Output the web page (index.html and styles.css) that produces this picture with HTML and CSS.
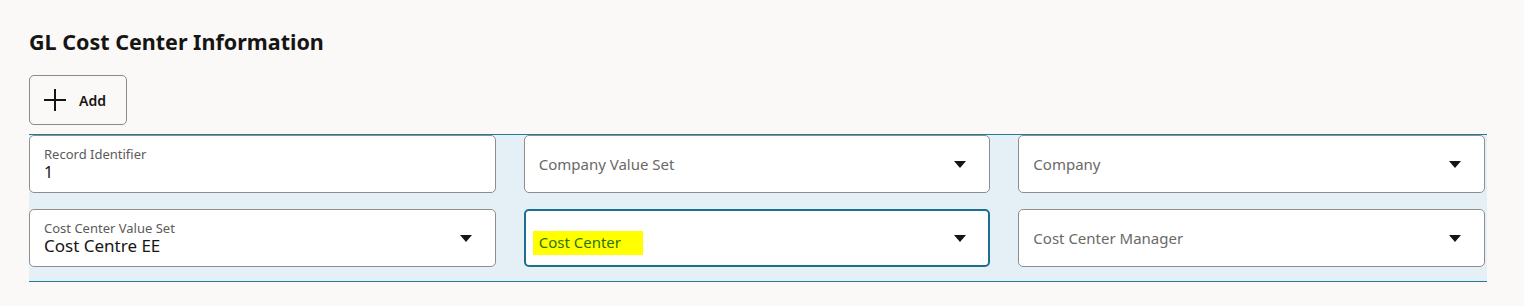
FILE: index.html
```html
<!DOCTYPE html>
<html lang="en">
<head>
    <meta charset="UTF-8">
    <meta name="viewport" content="width=device-width, initial-scale=1.0">
    <title>GL Cost Center Information</title>
    <link rel="stylesheet" href="styles.css">
</head>
<body>
    <div class="section">
        <h2 class="title">GL Cost Center Information</h2>
        <button class="add-btn">
            <svg class="plus" width="24" height="24" viewBox="0 0 24 24">
                <path d="M12 1v22M1 12h22" stroke="#161513" stroke-width="2" fill="none"/>
            </svg>
            <span>Add</span>
        </button>

        <div class="panel">
            <div class="field">
                <div class="field-text">
                    <div class="label">Record Identifier</div>
                    <div class="value">1</div>
                </div>
            </div>
            <div class="field select">
                <div class="field-text">
                    <div class="placeholder">Company Value Set</div>
                </div>
                <svg class="caret" width="12" height="7" viewBox="0 0 12 7"><path d="M0 0h12L6 7z" fill="#161513"/></svg>
            </div>
            <div class="field select">
                <div class="field-text">
                    <div class="placeholder">Company</div>
                </div>
                <svg class="caret" width="12" height="7" viewBox="0 0 12 7"><path d="M0 0h12L6 7z" fill="#161513"/></svg>
            </div>

            <div class="field select">
                <div class="field-text">
                    <div class="label">Cost Center Value Set</div>
                    <div class="value big">Cost Centre EE</div>
                </div>
                <svg class="caret" width="12" height="7" viewBox="0 0 12 7"><path d="M0 0h12L6 7z" fill="#161513"/></svg>
            </div>
            <div class="field select focused">
                <div class="field-text">
                    <div class="placeholder"><span class="highlight">Cost Center</span></div>
                </div>
                <svg class="caret" width="12" height="7" viewBox="0 0 12 7"><path d="M0 0h12L6 7z" fill="#161513"/></svg>
            </div>
            <div class="field select">
                <div class="field-text">
                    <div class="placeholder">Cost Center Manager</div>
                </div>
                <svg class="caret" width="12" height="7" viewBox="0 0 12 7"><path d="M0 0h12L6 7z" fill="#161513"/></svg>
            </div>
        </div>
    </div>
</body>
</html>
```

FILE: styles.css
```css
body {
    margin: 0;
    background-color: #faf9f7;
    font-family: "Noto Sans", "Open Sans", sans-serif;
    color: #161513;
}

.section {
    padding: 28px 0 0 29px;
}

.title {
    margin: 0;
    font-size: 21.5px;
    line-height: 28px;
    font-weight: 700;
    color: #161513;
}

.add-btn {
    display: flex;
    align-items: center;
    gap: 12px;
    margin-top: 19px;
    width: 98px;
    height: 50px;
    padding: 0 0 0 13px;
    background-color: #faf9f7;
    border: 1px solid #8c8b89;
    border-radius: 5px;
    font-family: inherit;
    font-size: 14px;
    font-weight: 600;
    color: #161513;
    cursor: pointer;
}

.panel {
    display: grid;
    grid-template-columns: repeat(3, 1fr);
    gap: 16px 28px;
    width: 1456px;
    margin-top: 9px;
    padding: 0 2px 14px 0;
    background-color: #e4f0f6;
    border-top: 1px solid #2a7899;
    border-bottom: 1px solid #2a7899;
}

.field {
    display: flex;
    align-items: center;
    height: 58px;
    padding: 0 14px;
    background-color: #fff;
    border: 1px solid #8f8e8c;
    border-radius: 5px;
    box-sizing: border-box;
}

.field-text {
    flex: 1;
}

.label {
    font-size: 13px;
    line-height: 16px;
    color: #5c5b59;
}

.value {
    font-size: 16px;
    line-height: 20px;
    color: #161513;
}

.value.big {
    font-size: 17px;
}

.placeholder {
    font-size: 15px;
    color: #6a6966;
}

.caret {
    margin-right: 9px;
}

.focused {
    border: 2px solid #1d6f91;
    padding: 0 13px 0 7px;
}

.focused .placeholder {
    padding-top: 9px;
}

.highlight {
    display: inline-block;
    padding: 1px 22px 3px 6px;
    background-color: #ffff00;
    color: #2f7400;
}
```
